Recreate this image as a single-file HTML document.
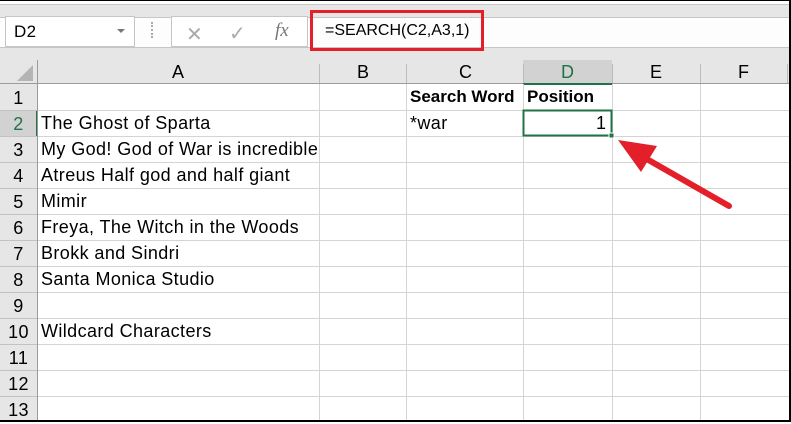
<!DOCTYPE html>
<html><head><style>
body{margin:0;width:791px;height:422px;overflow:hidden;background:#fff;font-family:"Liberation Sans",sans-serif;position:relative}
.a{position:absolute}
.c{font-family:"Liberation Sans",sans-serif;font-size:18px;letter-spacing:0.4px;color:#000}
</style></head><body>
<div class="a" style="left:0;top:0;width:791px;height:84px;background:#e6e6e6"></div>
<div class="a" style="left:0;top:0;width:791px;height:4px;background:#fff"></div>
<div class="a" style="left:0;top:4px;width:791px;height:1px;background:#c6c6c6"></div>
<div class="a" style="left:0;top:17px;width:791px;height:29px;background:#fdfdfd;border-top:1px solid #c6c6c6;border-bottom:1px solid #c6c6c6"></div>
<div class="a" style="left:5px;top:16px;width:128px;height:29px;background:#fff;border:1px solid #c6c6c6"></div>
<div class="a c" style="left:14px;top:22px;font-size:17px">D2</div>
<div class="a" style="left:117px;top:29px;border-left:4px solid transparent;border-right:4px solid transparent;border-top:4px solid #777"></div>
<div class="a" style="left:151px;top:22px;width:2px;height:16px;border-left:2px dotted #aaa"></div>
<div class="a" style="left:171px;top:16px;width:135px;height:29px;background:#fff;border:1px solid #c6c6c6"></div>
<div class="a" style="left:186px;top:22px;color:#aaa;font-size:20px">✕</div>
<div class="a" style="left:229px;top:21px;color:#aaa;font-size:20px">✓</div>
<div class="a" style="left:275px;top:20px;color:#777;font-size:19px;font-style:italic;font-family:'Liberation Serif',serif">fx</div>
<div class="a" style="left:310px;top:10px;width:168px;height:35px;border:3px solid #e3202a"></div>
<div class="a c" style="left:325px;top:22px;font-size:16px;letter-spacing:0">=SEARCH(C2,A3,1)</div>
<div class="a" style="left:0;top:83px;width:789px;height:1px;background:#9b9b9b"></div>
<div class="a" style="left:17px;top:65px;width:0;height:0;border-left:16px solid transparent;border-bottom:16px solid #b4b4b4"></div>
<div class="a" style="left:523px;top:60px;width:89px;height:23px;background:#d2d2d2;border-bottom:2px solid #217346"></div>
<div class="a" style="left:0;top:84px;width:37px;height:336px;background:#e6e6e6"></div>
<div class="a" style="left:0;top:110px;width:37px;height:26px;background:#d2d2d2"></div>
<div class="a" style="left:36px;top:110px;width:2px;height:26px;background:#217346"></div>
<svg class="a" style="left:0;top:0" width="791" height="422">
<g stroke="#d4d4d4" stroke-width="1">
<line x1="319.5" y1="84" x2="319.5" y2="422"/><line x1="406.5" y1="84" x2="406.5" y2="422"/><line x1="523.5" y1="84" x2="523.5" y2="422"/><line x1="612.5" y1="84" x2="612.5" y2="422"/><line x1="700.5" y1="84" x2="700.5" y2="422"/>
<line x1="37" y1="110.5" x2="789" y2="110.5"/><line x1="37" y1="136.5" x2="789" y2="136.5"/><line x1="37" y1="162.5" x2="789" y2="162.5"/><line x1="37" y1="188.5" x2="789" y2="188.5"/><line x1="37" y1="214.5" x2="789" y2="214.5"/><line x1="37" y1="240.5" x2="789" y2="240.5"/><line x1="37" y1="266.5" x2="789" y2="266.5"/><line x1="37" y1="292.5" x2="789" y2="292.5"/><line x1="37" y1="318.5" x2="789" y2="318.5"/><line x1="37" y1="344.5" x2="789" y2="344.5"/><line x1="37" y1="370.5" x2="789" y2="370.5"/><line x1="37" y1="396.5" x2="789" y2="396.5"/>
</g>
<g stroke="#c2c2c2"><line x1="0" y1="110.5" x2="37" y2="110.5"/><line x1="0" y1="136.5" x2="37" y2="136.5"/><line x1="0" y1="162.5" x2="37" y2="162.5"/><line x1="0" y1="188.5" x2="37" y2="188.5"/><line x1="0" y1="214.5" x2="37" y2="214.5"/><line x1="0" y1="240.5" x2="37" y2="240.5"/><line x1="0" y1="266.5" x2="37" y2="266.5"/><line x1="0" y1="292.5" x2="37" y2="292.5"/><line x1="0" y1="318.5" x2="37" y2="318.5"/><line x1="0" y1="344.5" x2="37" y2="344.5"/><line x1="0" y1="370.5" x2="37" y2="370.5"/><line x1="0" y1="396.5" x2="37" y2="396.5"/></g>
<g stroke="#9b9b9b"><line x1="37.5" y1="60" x2="37.5" y2="422"/></g>
<g stroke="#bcbcbc"><line x1="319.5" y1="64" x2="319.5" y2="83"/><line x1="406.5" y1="64" x2="406.5" y2="83"/><line x1="523.5" y1="64" x2="523.5" y2="83"/><line x1="612.5" y1="64" x2="612.5" y2="83"/><line x1="700.5" y1="64" x2="700.5" y2="83"/><line x1="787.5" y1="64" x2="787.5" y2="83"/></g>
<rect x="523.5" y="110.5" width="88" height="25" fill="none" stroke="#217346" stroke-width="2"/>
<rect x="609" y="133" width="5" height="5" fill="#217346" stroke="#fff" stroke-width="1"/>
<line x1="729" y1="206" x2="645" y2="158" stroke="#e3202a" stroke-width="6" stroke-linecap="round"/>
<polygon points="618,140 657,146 641,172" fill="#e3202a"/>
<rect x="789" y="0" width="2" height="422" fill="#000"/><rect x="0" y="420" width="791" height="2" fill="#000"/><rect x="0" y="0" width="791" height="1" fill="#000"/>
</svg>
<div class="a" style="left:0;top:84px;width:37px">
<div class="c" style="height:26px;line-height:28px;text-align:center">1</div>
<div class="c" style="height:26px;line-height:28px;text-align:center;color:#217346">2</div>
<div class="c" style="height:26px;line-height:28px;text-align:center">3</div>
<div class="c" style="height:26px;line-height:28px;text-align:center">4</div>
<div class="c" style="height:26px;line-height:28px;text-align:center">5</div>
<div class="c" style="height:26px;line-height:28px;text-align:center">6</div>
<div class="c" style="height:26px;line-height:28px;text-align:center">7</div>
<div class="c" style="height:26px;line-height:28px;text-align:center">8</div>
<div class="c" style="height:26px;line-height:28px;text-align:center">9</div>
<div class="c" style="height:26px;line-height:28px;text-align:center">10</div>
<div class="c" style="height:26px;line-height:28px;text-align:center">11</div>
<div class="c" style="height:26px;line-height:28px;text-align:center">12</div>
<div class="c" style="height:26px;line-height:28px;text-align:center">13</div>
</div>
<div class="a c" style="left:172px;top:62px">A</div>
<div class="a c" style="left:357px;top:62px">B</div>
<div class="a c" style="left:459px;top:62px">C</div>
<div class="a c" style="left:561px;top:62px;color:#217346">D</div>
<div class="a c" style="left:650px;top:62px">E</div>
<div class="a c" style="left:738px;top:62px">F</div>
<div class="a" style="left:41px;top:110px;line-height:26px">
<div class="c" style="height:26px">The Ghost of Sparta</div>
<div class="c" style="height:26px">My God! God of War is incredible</div>
<div class="c" style="height:26px">Atreus Half god and half giant</div>
<div class="c" style="height:26px">Mimir</div>
<div class="c" style="height:26px">Freya, The Witch in the Woods</div>
<div class="c" style="height:26px">Brokk and Sindri</div>
<div class="c" style="height:26px">Santa Monica Studio</div>
<div class="c" style="height:26px"></div>
<div class="c" style="height:26px">Wildcard Characters</div>
</div>
<div class="a c" style="left:410px;top:84px;line-height:26px;font-weight:bold;letter-spacing:0;font-size:17px">Search Word</div>
<div class="a c" style="left:527px;top:84px;line-height:26px;font-weight:bold;letter-spacing:0;font-size:17px">Position</div>
<div class="a c" style="left:410px;top:110px;line-height:26px">*war</div>
<div class="a c" style="left:596px;top:110px;line-height:26px">1</div>
</body></html>
